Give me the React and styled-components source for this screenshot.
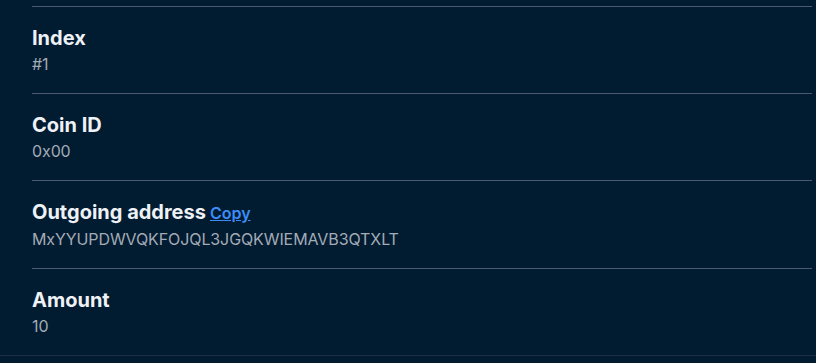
import React from 'react';
import styled, { createGlobalStyle } from 'styled-components';

const GlobalStyle = createGlobalStyle`
    html, body {
        margin: 0;
        padding: 0;
        background: #011b31;
        font-family: Inter, "Noto Sans", sans-serif;
    }
`

const Page = styled.div`
    min-height: 363px;
    padding-top: 6px;
    box-sizing: border-box;
    background: #011b31;
`

const List = styled.dl`
    margin: 0 4px 0 32px;
    border-bottom: 1px solid #4b5a6e;
`

const Row = styled.div`
    border-top: 1px solid #4b5a6e;
    padding: 17px 0 17px;
`

const Label = styled.dt`
    margin: 0;
    font-size: 20px;
    line-height: 28px;
    font-weight: 700;
    color: #eef1f5;
    letter-spacing: 0;
`

const CopyLink = styled.a`
    margin-left: 4px;
    font-size: 16px;
    font-weight: 600;
    color: #3d8bf5;
    text-decoration: underline;
    cursor: pointer;
`

const Value = styled.dd`
    margin: 0;
    font-size: 16px;
    line-height: 24px;
    font-weight: 400;
    color: #a3abb6;
    letter-spacing: -0.1px;
`

const BottomRule = styled.div`
    height: 1px;
    background: #1c2f45;
    margin-top: -1px;
`

const rows = [
    { label: 'Index', value: '#1' },
    { label: 'Coin ID', value: '0x00' },
    { label: 'Outgoing address', value: 'MxYYUPDWVQKFOJQL3JGQKWIEMAVB3QTXLT', copy: true },
    { label: 'Amount', value: '10' },
]

export default function App() {
    return (
        <Page>
            <GlobalStyle />
            <List>
                {rows.map((r) => (
                    <Row key={r.label}>
                        <Label>
                            {r.label}
                            {r.copy && <CopyLink>Copy</CopyLink>}
                        </Label>
                        <Value>{r.value}</Value>
                    </Row>
                ))}
            </List>
            <BottomRule />
        </Page>
    )
}
